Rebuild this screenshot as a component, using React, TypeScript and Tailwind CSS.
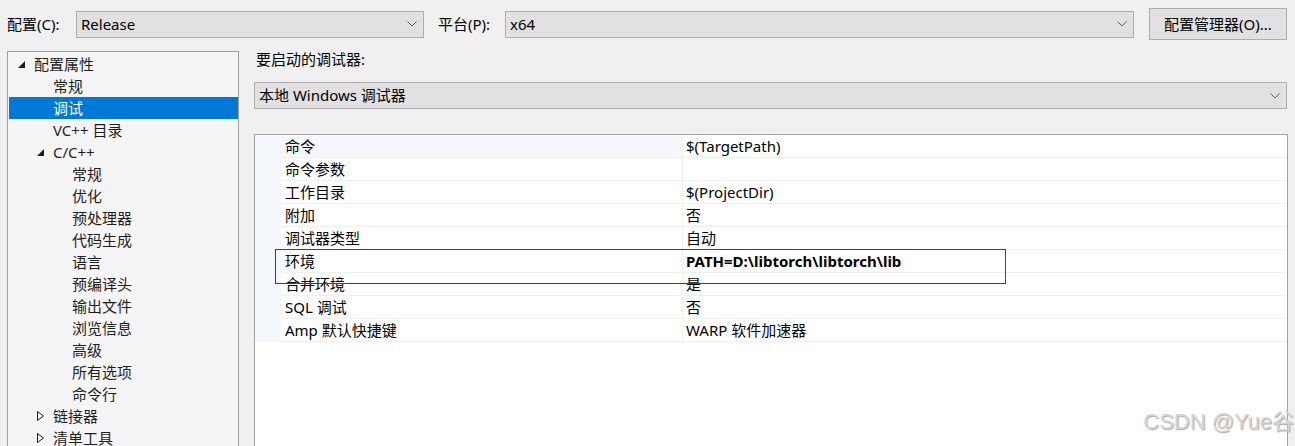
import type { ReactNode } from "react";

const font = {
  fontFamily: '"Noto Sans", "Noto Sans CJK SC", sans-serif',
};

type TreeItem = {
  label: string;
  level: number;
  toggle?: "open" | "closed";
  selected?: boolean;
};

const treeItems: TreeItem[] = [
  { label: "配置属性", level: 0, toggle: "open" },
  { label: "常规", level: 1 },
  { label: "调试", level: 1, selected: true },
  { label: "VC++ 目录", level: 1 },
  { label: "C/C++", level: 1, toggle: "open" },
  { label: "常规", level: 2 },
  { label: "优化", level: 2 },
  { label: "预处理器", level: 2 },
  { label: "代码生成", level: 2 },
  { label: "语言", level: 2 },
  { label: "预编译头", level: 2 },
  { label: "输出文件", level: 2 },
  { label: "浏览信息", level: 2 },
  { label: "高级", level: 2 },
  { label: "所有选项", level: 2 },
  { label: "命令行", level: 2 },
  { label: "链接器", level: 1, toggle: "closed" },
  { label: "清单工具", level: 1, toggle: "closed" },
];

const props: { name: string; value: string; bold?: boolean }[] = [
  { name: "命令", value: "$(TargetPath)" },
  { name: "命令参数", value: "" },
  { name: "工作目录", value: "$(ProjectDir)" },
  { name: "附加", value: "否" },
  { name: "调试器类型", value: "自动" },
  { name: "环境", value: "PATH=D:\\libtorch\\libtorch\\lib", bold: true },
  { name: "合并环境", value: "是" },
  { name: "SQL 调试", value: "否" },
  { name: "Amp 默认快捷键", value: "WARP 软件加速器" },
];

function Chevron() {
  return (
    <svg width="10" height="6" viewBox="0 0 10 6" className="shrink-0">
      <polyline points="0.5,0.5 5,5 9.5,0.5" fill="none" stroke="#606060" strokeWidth="1" />
    </svg>
  );
}

function Combo({ children, className }: { children: ReactNode; className: string }) {
  return (
    <div
      className={`flex h-[27px] items-center justify-between border border-[#adadad] bg-[#e1e1e1] pl-[4px] pr-[6px] text-[15px] text-black ${className}`}
    >
      <span className="leading-none">{children}</span>
      <Chevron />
    </div>
  );
}

function Toggle({ kind }: { kind: "open" | "closed" }) {
  if (kind === "open") {
    return (
      <svg width="7" height="7" viewBox="0 0 7 7">
        <polygon points="7,0 7,7 0,7" fill="#1e1e1e" />
      </svg>
    );
  }
  return (
    <svg width="7" height="10" viewBox="0 0 7 10">
      <polygon points="0.5,0.5 6.5,5 0.5,9.5" fill="none" stroke="#1e1e1e" strokeWidth="1" />
    </svg>
  );
}

function Tree() {
  return (
    <div className="w-[232px] shrink-0 border border-[#a0a0a0] bg-[#f5f5f5] pt-[1px] pl-[1px]">
      {treeItems.map((item, i) => {
        const indent = ["pl-[25px]", "pl-[44px]", "pl-[63px]"][item.level];
        return (
          <div
            key={i}
            className={`relative flex h-[22px] w-[229px] items-center text-[15px] leading-none ${indent} ${
              item.selected ? "bg-[#0078d7] text-white" : "text-[#1e1e1e]"
            }`}
          >
            {item.toggle ? (
              <span
                className={`absolute flex items-center ${
                  item.level === 0 ? "left-[9px]" : "left-[28px]"
                }`}
              >
                <Toggle kind={item.toggle} />
              </span>
            ) : null}
            {item.label}
          </div>
        );
      })}
    </div>
  );
}

function PropertyGrid() {
  return (
    <div className="mt-[25px] flex-1 border-l border-t border-r border-[#a0a0a0] bg-white">
      {props.map((p, i) => (
        <div key={i} className="flex h-[23px] text-[15px] leading-none text-black">
          <div className="w-[26px] shrink-0 bg-[#f4f7fc]" />
          <div
            className={`flex w-[402px] shrink-0 items-center border-b border-r border-[#f0f0f0] pl-[4px] ${
              i === 0 ? "bg-[#f4f7fc]" : ""
            }`}
          >
            {p.name}
          </div>
          <div
            className={`flex flex-1 items-center border-b border-[#f0f0f0] pl-[3px] ${
              p.bold ? "font-bold" : ""
            }`}
          >
            {p.value}
          </div>
        </div>
      ))}
    </div>
  );
}

export default function App() {
  return (
    <div
      className="relative h-[446px] w-[1295px] overflow-hidden bg-[#f0f0f0] text-black"
      style={font}
    >
      <div className="flex h-[48px] items-center pl-[7px] text-[15px]">
        <span className="w-[69px] leading-none">配置(C):</span>
        <Combo className="w-[348px]">Release</Combo>
        <span className="ml-[14px] w-[67px] leading-none">平台(P):</span>
        <Combo className="w-[629px]">x64</Combo>
        <button
          type="button"
          className="ml-[15px] h-[32px] w-[138px] border border-[#adadad] bg-[#e1e1e1] text-[15px] leading-none"
        >
          配置管理器(O)...
        </button>
      </div>

      <div className="flex pl-[7px]">
        <div className="mt-[3px]">
          <Tree />
        </div>
        <div className="ml-[15px] flex w-[1034px] flex-col">
          <div className="h-[34px] pl-[2px] pt-[0px] text-[15px] leading-[22px]">要启动的调试器:</div>
          <Combo className="w-[1033px]">本地 Windows 调试器</Combo>
          <PropertyGrid />
        </div>
      </div>

      <div className="absolute left-[275px] top-[249px] h-[35px] w-[731px] border border-[#e00000]" />

      <div
        className="absolute right-[1px] top-[411px] text-[22px] leading-none text-[#d6d6d6] [text-shadow:1px_1px_1px_#a8a8a8]"
        style={{ fontFamily: '"Liberation Sans", "Noto Sans CJK SC", sans-serif' }}
      >
        CSDN @Yue谷
      </div>
    </div>
  );
}
